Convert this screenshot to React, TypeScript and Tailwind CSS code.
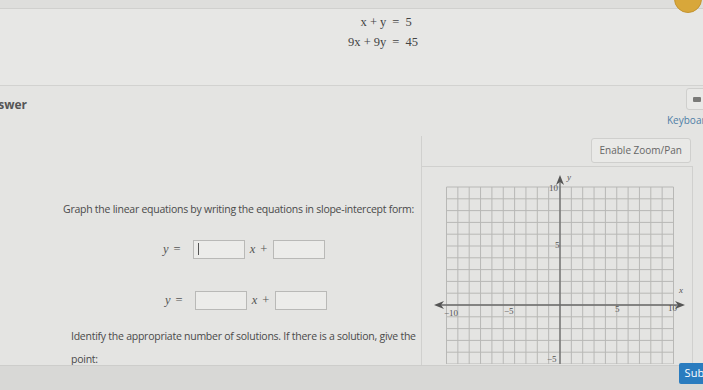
import React from 'react';

const SX = 11.35;
const SY = 11.8;
const OX = 138;
const OY = 138;

function Graph() {
    const vLines = [];
    for (let i = -10; i <= 10; i++) vLines.push(OX + i * SX);
    const hLines = [];
    for (let j = -6; j <= 10; j++) hLines.push(OY - j * SY);
    const left = OX - 10 * SX;
    const right = OX + 10 * SX;
    const top = OY - 10 * SY;

    return (
        <svg width="272" height="197" viewBox="0 0 272 197" className="block">
            {vLines.map((x, i) => (
                <line key={'v' + i} x1={x} y1={top} x2={x} y2={210} stroke="#b8b8b6" strokeWidth="1" />
            ))}
            {hLines.map((y, i) => (
                <line key={'h' + i} x1={left} y1={y} x2={right} y2={y} stroke="#b8b8b6" strokeWidth="1" />
            ))}
            {/* axes */}
            <line x1="16" y1={OY} x2="258" y2={OY} stroke="#6a6a6a" strokeWidth="1.3" />
            <line x1={OX} y1="12" x2={OX} y2="200" stroke="#6a6a6a" strokeWidth="1.3" />
            <polygon points={`12,${OY} 22,${OY - 4} 19,${OY} 22,${OY + 4}`} fill="#555" />
            <polygon points={`263,${OY} 253,${OY - 4} 256,${OY} 253,${OY + 4}`} fill="#555" />
            <polygon points={`${OX},8 ${OX - 4},18 ${OX},15 ${OX + 4},18`} fill="#555" />
            <g fontFamily="'Liberation Serif', serif" fontSize="9" fill="#555">
                <text x="127" y="24">10</text>
                <text x="133" y="81">5</text>
                <text x="145" y="13" fontStyle="italic">y</text>
                <text x="257" y="126" fontStyle="italic">x</text>
                <text x="22" y="149">−10</text>
                <text x="82" y="147">−5</text>
                <text x="193" y="145">5</text>
                <text x="246" y="144">10</text>
                <text x="125" y="195">−5</text>
            </g>
        </svg>
    );
}

function Box({ cursor }: { cursor?: boolean }) {
    return (
        <div className="w-[52px] h-[19px] border border-[#b9b9b7] bg-[#ececea] flex items-center pl-[4px]">
            {cursor && <div className="w-px h-[12px] bg-[#555]" />}
        </div>
    );
}

function EqRow({ className, cursor }: { className: string; cursor?: boolean }) {
    return (
        <div className={`flex items-center text-[12.5px] text-[#555] font-['Liberation_Serif',serif] ${className}`}>
            <span className="italic">y</span>
            <span className="ml-[5px] mr-[12px]">=</span>
            <Box cursor={cursor} />
            <span className="italic ml-[5px]">x</span>
            <span className="ml-[5px] mr-[6px]">+</span>
            <Box />
        </div>
    );
}

export default function App() {
    return (
        <div className="w-[703px] h-[390px] overflow-hidden relative flex flex-col bg-[#e4e4e2] font-['Open_Sans',sans-serif]">
            <div className="absolute top-[-15px] left-[674px] w-[28px] h-[28px] rounded-full bg-[#d8a73a] border border-[#c39330]" />

            <div className="h-[9px] shrink-0 bg-[#dededc] border-b border-[#d0d0ce]" />

            {/* equations */}
            <div className="h-[77px] shrink-0 bg-[#e7e7e5] border-b border-[#d2d2d0] pt-[3px] pl-[348px] font-['Liberation_Serif',serif] text-[12.5px] text-[#444]">
                <div className="grid grid-cols-[auto_auto] gap-x-[6px] leading-[20px] w-max">
                    <span className="text-right">x + y</span>
                    <span>= &nbsp;5</span>
                    <span className="text-right">9x + 9y</span>
                    <span>= &nbsp;45</span>
                </div>
            </div>

            {/* answer header */}
            <div className="h-[50px] shrink-0 flex justify-between">
                <div className="pt-[10px] ml-[-18px] text-[12px] font-bold text-[#555]">Answer</div>
                <div className="flex flex-col items-start w-[36px] pt-[2px]">
                    <div className="ml-[19px] w-[24px] h-[22px] border border-[#cfcfcd] rounded-[3px] bg-[#e9e9e7] flex items-center pl-[6px]">
                        <div className="w-[8px] h-[5px] bg-[#7a7a78] rounded-[1px]" />
                    </div>
                    <span className="text-[10px] text-[#4f7ea6] mt-[3px] whitespace-nowrap">Keyboard</span>
                </div>
            </div>

            {/* main */}
            <div className="h-[229px] shrink-0 flex">
                <div className="w-[421px] shrink-0 flex flex-col text-[10.5px] text-[#4a4a4a]">
                    <p className="mt-[66px] ml-[63px] whitespace-nowrap tracking-[-0.25px]">
                        Graph the linear equations by writing the equations in slope-intercept form:
                    </p>
                    <EqRow cursor className="mt-[22px] ml-[163px]" />
                    <EqRow className="mt-[32px] ml-[165px]" />
                    <p className="mt-[15px] ml-[71px] leading-[23px] tracking-[-0.25px] whitespace-nowrap">
                        Identify the appropriate number of solutions. If there is a solution, give the
                        <br />
                        point:
                    </p>
                </div>
                <div className="w-[272px] shrink-0 border-l border-[#d0d0ce] flex flex-col">
                    <div className="h-[30px] flex justify-end items-start pt-[2px] pr-[2px]">
                        <button className="h-[25px] px-[8px] border border-[#cfcfcd] rounded-[3px] bg-[#e9e9e7] text-[10px] text-[#666]">
                            Enable Zoom/Pan
                        </button>
                    </div>
                    <div className="border-t border-r border-[#d0d0ce] h-[198px] overflow-hidden">
                        <Graph />
                    </div>
                </div>
            </div>

            {/* footer */}
            <div className="flex-1 bg-[#d8d8d6] border-t border-[#cdcdcb] flex justify-end">
                <button className="mt-[-3px] mr-[-25px] h-[21px] pl-[6px] pr-[7px] rounded-[2px] bg-[#2a7cbf] text-white text-[11px]">
                    Submit
                </button>
            </div>
        </div>
    );
}
